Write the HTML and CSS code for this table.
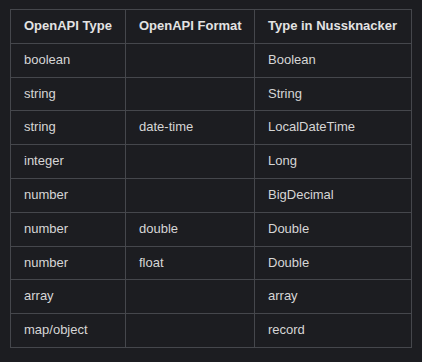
FILE: index.html
```html
<!DOCTYPE html>
<html>
<head>
<meta charset="utf-8">
<link rel="stylesheet" href="styles.css">
</head>
<body>
<table class="types">
  <thead>
    <tr><th class="c1">OpenAPI Type</th><th class="c2">OpenAPI Format</th><th class="c3">Type in Nussknacker</th></tr>
  </thead>
  <tbody>
    <tr><td>boolean</td><td></td><td>Boolean</td></tr>
    <tr><td>string</td><td></td><td>String</td></tr>
    <tr><td>string</td><td>date-time</td><td>LocalDateTime</td></tr>
    <tr><td>integer</td><td></td><td>Long</td></tr>
    <tr><td>number</td><td></td><td>BigDecimal</td></tr>
    <tr><td>number</td><td>double</td><td>Double</td></tr>
    <tr><td>number</td><td>float</td><td>Double</td></tr>
    <tr><td>array</td><td></td><td>array</td></tr>
    <tr><td>map/object</td><td></td><td>record</td></tr>
  </tbody>
</table>
</body>
</html>
```
FILE: styles.css
```css
html, body {
  margin: 0;
  background: #1c1d21;
}
body {
  padding: 9px 10px;
  font-family: "Liberation Sans", Arial, sans-serif;
  font-size: 13px;
  color: #d6d6d6;
}
.types {
  border-collapse: collapse;
  table-layout: fixed;
  width: 402px;
}
.types th, .types td {
  border: 1px solid #45474c;
  padding: 7px 13px 7px 13px;
  line-height: 18.8px;
  text-align: left;
  white-space: nowrap;
}
.types th {
  font-weight: bold;
  color: #e3e3e3;
}
.c1 { width: 88px; }
.c2 { width: 102px; }
.c3 { width: 130px; }
```
